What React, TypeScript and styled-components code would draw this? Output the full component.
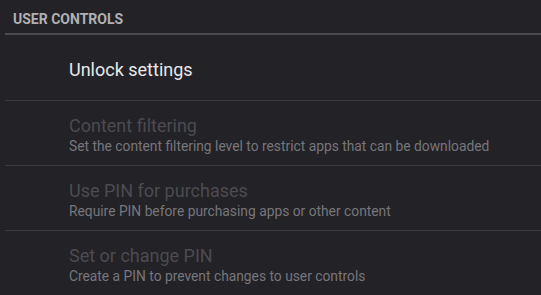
import React from "react";
import styled, { createGlobalStyle } from "styled-components";

const Global = createGlobalStyle`
  html, body { margin: 0; padding: 0; background: #232227; }
  body { font-family: Roboto, "Noto Sans", sans-serif; }
`;

const Screen = styled.div`
  width: 541px;
  height: 295px;
  background: #232227;
  overflow: hidden;
  display: flex;
  flex-direction: column;
`;

const Header = styled.div`
  box-sizing: border-box;
  height: 35px;
  flex: none;
  margin-left: 5px;
  padding: 4px 0 0 8px;
  border-bottom: 2px solid #4b4a50;
  display: flex;
  align-items: center;
  font-size: 14px;
  font-weight: 700;
  color: #b0b0b2;
`;

const Row = styled.div<{ $last?: boolean; $tall?: boolean }>`
  box-sizing: border-box;
  height: ${(p) => (p.$tall ? 66 : 65)}px;
  flex: none;
  margin-left: 5px;
  padding: 3px 0 0 64px;
  border-bottom: 1px solid ${(p) => (p.$last ? "transparent" : "#3c3b40")};
  display: flex;
  flex-direction: column;
  justify-content: center;
`;

const Title = styled.div<{ $disabled?: boolean }>`
  font-size: 18px;
  line-height: 21px;
  color: ${(p) => (p.$disabled ? "#4c4b50" : "#e8e8e8")};
`;

const Summary = styled.div`
  margin-top: 2px;
  font-size: 13.8px;
  line-height: 17px;
  color: #77767b;
`;

const items = [
  { title: "Content filtering", summary: "Set the content filtering level to restrict apps that can be downloaded" },
  { title: "Use PIN for purchases", summary: "Require PIN before purchasing apps or other content" },
  { title: "Set or change PIN", summary: "Create a PIN to prevent changes to user controls" },
];

export default function App() {
  return (
    <Screen>
      <Global />
      <Header>USER CONTROLS</Header>
      <Row $tall>
        <Title>Unlock settings</Title>
      </Row>
      {items.map((it, i) => (
        <Row key={it.title} $last={i === items.length - 1}>
          <Title $disabled>{it.title}</Title>
          <Summary>{it.summary}</Summary>
        </Row>
      ))}
    </Screen>
  );
}
